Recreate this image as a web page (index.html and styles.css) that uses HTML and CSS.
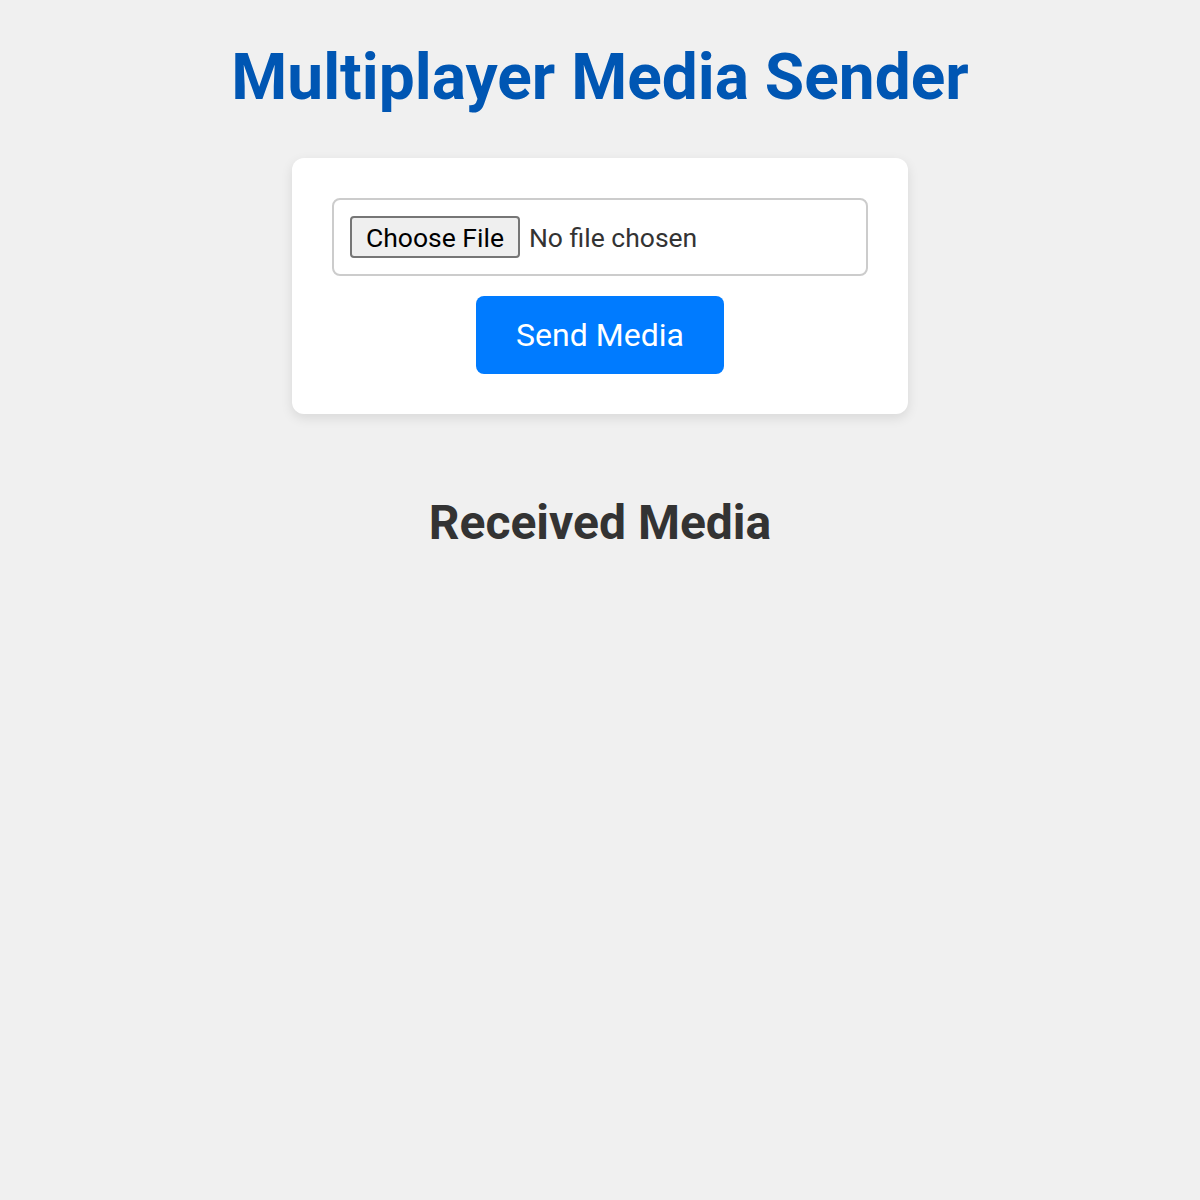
FILE: index.html
```html
<!DOCTYPE html>
<html lang="en">
<head>
    <meta charset="UTF-8">
    <meta name="viewport" content="width=device-width, initial-scale=1.0">
    <title>Multiplayer Media Sender</title>
    <link rel="stylesheet" href="styles.css">
</head>
<body>
    <h1 class="title">Multiplayer Media Sender</h1>

    <div class="sender">
        <input type="file" id="media-input" class="file-input">
        <button id="send-btn" class="send-btn">Send Media</button>
    </div>

    <h2 class="received-title">Received Media</h2>
    <div class="received" id="received"></div>
</body>
</html>
```

FILE: styles.css
```css
body {
    font-family: 'Roboto', 'Liberation Sans', sans-serif;
    background-color: #f0f0f0;
    color: #333;
    margin: 0;
    padding: 0;
    display: flex;
    flex-direction: column;
    align-items: center;
}

.title {
    font-size: 64px;
    font-weight: bold;
    color: #0056b3;
    margin: 40px 0 43px;
    line-height: 75px;
}

.sender {
    width: 536px;
    padding: 40px;
    background-color: #fff;
    border-radius: 12px;
    box-shadow: 0 4px 12px rgba(0, 0, 0, 0.1);
    display: flex;
    flex-direction: column;
    align-items: center;
    gap: 20px;
}

.file-input {
    width: 100%;
    height: 78px;
    box-sizing: border-box;
    padding: 16px;
    border: 2px solid #ccc;
    border-radius: 8px;
    font-family: inherit;
    font-size: 26.5px;
    color: #333;
}

.file-input::file-selector-button {
    height: 42px;
    padding: 0 14px;
    margin-right: 9px;
    font-family: inherit;
    font-size: 26.5px;
    color: #000;
    background-color: #efefef;
    border: 2px solid #767676;
    border-radius: 4px;
}

.send-btn {
    padding: 20px 40px;
    background-color: #007bff;
    color: #fff;
    border: none;
    border-radius: 8px;
    font-family: inherit;
    font-size: 32px;
    line-height: 38px;
    cursor: pointer;
}

.send-btn:hover {
    background-color: #0069d9;
}

.received-title {
    font-size: 48px;
    font-weight: bold;
    color: #333;
    margin: 80px 0 20px;
}
```
